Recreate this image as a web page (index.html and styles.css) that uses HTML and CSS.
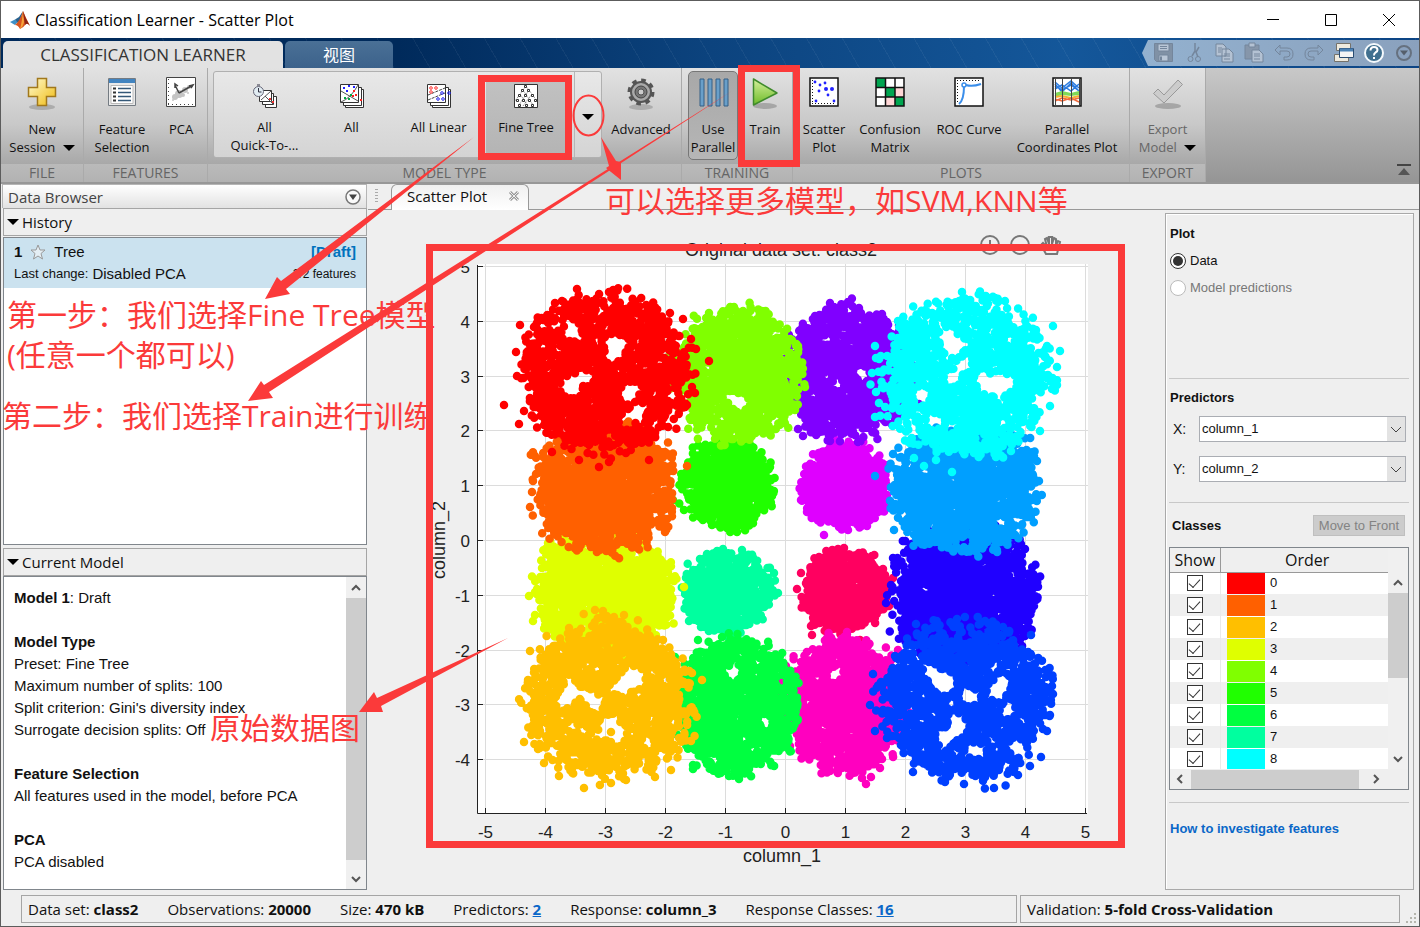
FILE: index.html
```html
<!DOCTYPE html>
<html lang="en">
<head>
<meta charset="utf-8">
<meta name="viewport" content="width=device-width, initial-scale=1">
<title>Classification Learner - Scatter Plot</title>
<link rel="stylesheet" href="styles.css">
</head>
<body>
<div class="window">
  <header class="titlebar">
    <svg class="logo" viewBox="0 0 20 20" aria-hidden="true">
      <path d="M0 12 5 9.500 8 12 5 15z" fill="#3f8fc6"/>
      <path d="M5 9.500 9 7 13 1 10 11 8 13z" fill="#29628f"/>
      <path d="M13 1Q10 11 5 15q3 0 5 4 4-2 6-5 2-1 4 2-4-8-7-15z" fill="#d9541e"/>
      <path d="M13 1Q12 12 10 19q3-2 4-7z" fill="#f6a43a"/>
      <path d="M13 1q2 7 7 15-3-4-5-1-1-6-2-14z" fill="#8e2415"/>
    </svg>
    <h1 class="title">Classification Learner - Scatter Plot</h1>
    <div class="winbtns">
      <button type="button" aria-label="Minimize"><svg viewBox="0 0 14 14"><path d="M1 6.500h12"/></svg></button>
      <button type="button" aria-label="Maximize"><svg viewBox="0 0 14 14"><path d="M1.500 1.500h11v11h-11z"/></svg></button>
      <button type="button" aria-label="Close"><svg viewBox="0 0 14 14"><path d="M1 1l12 12M13 1 1 13"/></svg></button>
    </div>
  </header>

  <nav class="tabstrip">
    <button type="button" class="tab tab-on">CLASSIFICATION LEARNER</button>
    <button type="button" class="tab tab-off">视图</button>
    <div class="quick">
      <button type="button" aria-label="Save"><svg class="dim" viewBox="0 0 22 22"><path d="M1.500 1.500h18v18h-16l-2-2z" fill="#8091a5"/><path d="M5 2h11v7H5zM6 13h9v6H6z" fill="#b9c6d6"/><path d="M7 4.500h7M7 6.500h7"/><path d="M8 14.500v4" stroke-width="2"/></svg></button>
      <button type="button" aria-label="Cut"><svg class="dim" viewBox="0 0 22 22"><path d="M12 1v8l-3 5M16 5l-3 5 2 5" stroke-width="1.500"/><circle cx="7.500" cy="17" r="2.500"/><circle cx="15" cy="17" r="2.500"/></svg></button>
      <button type="button" aria-label="Copy"><svg class="dim" viewBox="0 0 22 22"><path d="M3 2h7l3 3v9H3zM9 7h7l4 4v9H9z" fill="#b4c2d3"/><path d="M5 6h4M5 8h3M5 10h3M11 12h6M11 14h6M11 17h6"/></svg></button>
      <button type="button" aria-label="Paste"><svg class="dim" viewBox="0 0 22 22"><path d="M2 3h14v14H2z" fill="#8696aa"/><path d="M6 1h6v4H6zM9 8h7l4 4v8H9z" fill="#b4c2d3"/><path d="M11 12h6M11 14h6M11 17h6"/></svg></button>
      <button type="button" aria-label="Undo"><svg class="dim" viewBox="0 0 22 22"><path d="M2 8l5-5v3h7q6 0 6 6t-6 6h-3v-3h3q3 0 3-3t-3-3H7v4z"/></svg></button>
      <button type="button" aria-label="Redo"><svg class="dim" viewBox="0 0 22 22"><path d="M20 8l-5-5v3H8q-6 0-6 6t6 6h3v-3H8q-3 0-3-3t3-3h7v4z"/></svg></button>
      <button type="button" aria-label="Switch windows"><svg viewBox="0 0 22 22"><path d="M3.500 1.500h14v7h-14zM1.500 12.500h14v7h-14z" fill="#eeeade" stroke="#75726a"/><path d="M6.500 6.500h14v9h-14z" fill="#f4f4f4" stroke="#2a4d72"/><path d="M7 6.500h13v3H7z" fill="#4c82b4"/></svg></button>
      <button type="button" aria-label="Help"><svg viewBox="0 0 22 22"><circle cx="11" cy="11" r="9" fill="#41708f" stroke="#f4f9fc" stroke-width="2"/><path d="M7.500 8.500q0-3.500 3.500-3.500t3.500 3q0 1.500-2 2.500-1.500 1-1.500 3M11 15v2" fill="none" stroke="#fff" stroke-width="2"/></svg></button>
      <button type="button" aria-label="More"><svg viewBox="0 0 22 22"><circle cx="11" cy="11" r="7" fill="none" stroke="#66717f" stroke-width="2"/><path d="M7 8.500h8l-4 5z" fill="#555f6b"/></svg></button>
    </div>
  </nav>

  <div class="ribbon">
    <section class="group g-file">
      <div class="tools">
        <button type="button" class="tool w-file">
          <svg class="ico" viewBox="0 0 32 36"><defs><linearGradient id="gold" x1="0" y1="0" x2="1" y2="1"><stop offset="0" stop-color="#fffbd0"/><stop offset="1" stop-color="#f0bb10"/></linearGradient></defs><ellipse cx="16" cy="31" rx="13" ry="3" fill="#888" opacity=".5"/><path d="M11.500 2.500h9v9h9v9h-9v9h-9v-9h-9v-9h9z" fill="url(#gold)" stroke="#a1781c" stroke-width="1.500"/></svg>
          <span>New<br>Session <i class="arrow"></i></span>
        </button>
      </div>
      <h2>FILE</h2>
    </section>
    <section class="group g-features">
      <div class="tools">
        <button type="button" class="tool w-feature">
          <svg class="ico" viewBox="0 0 32 36"><path d="M2.500 2.500h27v27h-27z" fill="#e9e9e9" stroke="#747b82"/><path d="M3 3h26v4H3z" fill="#4284c0"/><path d="M5 9.500h22v18H5z" fill="#fff" stroke="#bbb"/><path d="M7 12.500h3M7 16.500h3M7 20.500h3M7 24.500h3" stroke="#333" stroke-width="2"/><path d="M12 12.500h13M12 16.500h13M12 20.500h13M12 24.500h13" stroke="#345878" stroke-width="1.500"/></svg>
          <span>Feature<br>Selection</span>
        </button>
        <button type="button" class="tool w-pca">
          <svg class="ico" viewBox="0 0 32 36"><path d="M1.500 1.500h29v29h-29z" fill="#fff" stroke="#444"/><path d="M3.500 3v26M3 28.500h26" stroke="#444" stroke-dasharray="1 3" fill="none"/><g fill="#c4c4c4"><circle cx="10" cy="21" r="3"/><circle cx="14" cy="18" r="4"/><circle cx="20" cy="14" r="3"/><circle cx="18" cy="19" r="2"/><circle cx="24" cy="11" r="2"/><circle cx="8" cy="24" r="1"/><circle cx="23" cy="17" r="1"/></g><path d="M14 17 10 9m0 3V8l3 2M14 17l14-8m-4 1 4-1-2 3" fill="none" stroke="#444" stroke-width="1.500"/></svg>
          <span>PCA</span>
        </button>
      </div>
      <h2>FEATURES</h2>
    </section>
    <section class="group g-model">
      <div class="tools">
        <div class="gallery">
          <button type="button" class="model">
            <svg class="gico" viewBox="0 0 26 26"><g fill="#fff" stroke="#333"><path d="M13.500 13.500h11v11h-11z"/><path d="M10.500 10.500h11v11h-11z"/><path d="M7.500 7.500h12v11h-12z"/></g><path d="M9 17 19 8M13 13l8 8" stroke="#555"/><path d="M17 16h2M20 19h2" stroke="#e33" stroke-width="2"/><circle cx="6.500" cy="8.500" r="5" fill="#e1ecf2" stroke="#667"/><path d="M6.500 5v4h3M5 2h3" stroke="#334" fill="none"/></svg>
            <span>All<br>Quick-To-...</span>
          </button>
          <button type="button" class="model">
            <svg class="gico" viewBox="0 0 26 26"><g fill="#fff" stroke="#333"><path d="M6.500 6.500h18v18h-18z"/><path d="M4.500 4.500h18v18h-18z"/><path d="M1.500 1.500h18v18h-18z"/></g><path d="M2 19Q12 15 19 2M2 8l17 10" stroke="#555" fill="none"/><path d="M4 5h2M9 3h2M7 8h2M14 4h2" stroke="#22f" stroke-width="2"/><path d="M14 8h2M16 12h2M13 13h2M21 17h2" stroke="#f22" stroke-width="2"/><path d="M5 15h2M9 16h2M11 12h2" stroke="#0a4" stroke-width="2"/></svg>
            <span>All</span>
          </button>
          <button type="button" class="model">
            <svg class="gico" viewBox="0 0 26 26"><g fill="#fff" stroke="#333"><path d="M6.500 6.500h18v18h-18z"/><path d="M4.500 4.500h18v18h-18z"/><path d="M1.500 1.500h18v18h-18z"/></g><path d="M2 12 19 5M2 17l17-7" stroke="#444" stroke-dasharray="3 1"/><g fill="none" stroke="#f33"><circle cx="5" cy="5" r="1.300"/><circle cx="10" cy="5" r="1.300"/><circle cx="5" cy="9" r="1.300"/></g><g fill="none" stroke="#22e"><circle cx="16" cy="10" r="1.300"/><circle cx="12" cy="16" r="1.300"/><circle cx="17" cy="16" r="1.300"/><circle cx="23" cy="10" r="1.300"/></g></svg>
            <span>All Linear</span>
          </button>
          <button type="button" class="model model-on" aria-pressed="true">
            <svg class="gico" viewBox="0 0 26 26"><path d="M1.500 1.500h23v23h-23z" fill="#fff" stroke="#333"/><path d="M13 3 2 18M13 3l11 15M10 7l10 15M16 7 6 22M7 11l8 12M19 11l-9 12" stroke="#777" stroke-dasharray="1 1"/><g fill="#fff" stroke="#333"><path d="M11.500 2.500h2v2h-2zM8.500 6.500h2v2h-2zM14.500 6.500h2v2h-2zM5.500 11.500h2v2h-2zM11.500 11.500h2v2h-2zM18.500 11.500h2v2h-2zM3.500 16.500h2v2h-2zM9.500 16.500h2v2h-2zM15.500 16.500h2v2h-2zM21.500 16.500h2v2h-2zM5.500 21.500h2v2h-2zM12.500 21.500h2v2h-2zM18.500 21.500h2v2h-2z"/></g></svg>
            <span>Fine Tree</span>
          </button>
          <button type="button" class="more" aria-label="More models"><i class="arrow"></i></button>
        </div>
        <button type="button" class="tool w-adv">
          <svg class="ico" viewBox="0 0 32 36"><ellipse cx="16" cy="31" rx="12" ry="3" fill="#888" opacity=".5"/><circle cx="16" cy="16" r="11.500" fill="none" stroke="#555" stroke-width="4" stroke-dasharray="4.500 4.500"/><circle cx="16" cy="16" r="10" fill="#a9a9a9" stroke="#555" stroke-width="2"/><circle cx="16" cy="16" r="6" fill="#777" stroke="#444"/><circle cx="16" cy="16" r="3" fill="#ccc" stroke="#555"/></svg>
          <span>Advanced</span>
        </button>
      </div>
      <h2>MODEL TYPE</h2>
    </section>
    <section class="group g-train">
      <div class="tools">
        <button type="button" class="tool w-par tool-on" aria-pressed="true">
          <svg class="ico" viewBox="0 0 32 36"><g fill="#699fc9" stroke="#345f85"><path d="M3 3h4v27H3zM11 3h4v27h-4zM19 3h4v27h-4zM27 3h4v27h-4z"/></g></svg>
          <span>Use<br>Parallel</span>
        </button>
        <button type="button" class="tool w-train">
          <svg class="ico" viewBox="0 0 32 36"><defs><linearGradient id="play" x1="0" y1="0" x2="0" y2="1"><stop offset="0" stop-color="#d5ef9c"/><stop offset="1" stop-color="#6dbb28"/></linearGradient></defs><ellipse cx="16" cy="30" rx="12" ry="3" fill="#888" opacity=".6"/><path d="M4.500 3v26L28 17z" fill="url(#play)" stroke="#3f8a2c" stroke-width="1.500" stroke-linejoin="round"/></svg>
          <span>Train</span>
        </button>
      </div>
      <h2>TRAINING</h2>
    </section>
    <section class="group g-plots">
      <div class="tools">
        <button type="button" class="tool w-scatter">
          <svg class="ico" viewBox="0 0 32 36"><path d="M2 2h28v28H2z" fill="#fff" stroke="#111" stroke-width="1.500"/><path d="M4.500 4v24M4 27.500h24" stroke="#111" stroke-dasharray="1 2" fill="none"/><g fill="#22f"><circle cx="7" cy="6" r="1.400"/><circle cx="12" cy="9" r="1.400"/><circle cx="17" cy="7" r="1.400"/><circle cx="11" cy="15" r="1.400"/><circle cx="18" cy="13" r="2"/><circle cx="24" cy="13" r="2"/><circle cx="20" cy="19" r="1.400"/><circle cx="8" cy="25" r="1.400"/><circle cx="26" cy="25" r="1.400"/></g></svg>
          <span>Scatter<br>Plot</span>
        </button>
        <button type="button" class="tool w-conf">
          <svg class="ico" viewBox="0 0 32 36"><path d="M2 2h28v28H2z" fill="#fff"/><path d="M2 2h9v9H2zM12 12h9v9h-9zM21 21h9v9h-9z" fill="#00a550"/><path d="M21 12h9v9h-9zM12 21h9v9h-9z" fill="#ffd6d6"/><path d="M2 2h28v28H2zM11.500 2v28M21 2v28M2 11.500h28M2 21h28" fill="none" stroke="#111" stroke-width="1.500"/></svg>
          <span>Confusion<br>Matrix</span>
        </button>
        <button type="button" class="tool w-roc">
          <svg class="ico" viewBox="0 0 32 36"><path d="M2 2h28v28H2z" fill="#fff" stroke="#111" stroke-width="1.500"/><path d="M4.500 4v24M4 4.500h24" stroke="#111" stroke-dasharray="1 2" fill="none"/><path d="M6 28q5-4 5-18M13 9q6 2 15-1" fill="none" stroke="#3b8eea" stroke-width="2"/><circle cx="11" cy="9" r="2" fill="#fff" stroke="#3b8eea" stroke-width="1.500"/></svg>
          <span>ROC Curve</span>
        </button>
        <button type="button" class="tool w-coord">
          <svg class="ico" viewBox="0 0 32 36"><path d="M2 2h28v28H2z" fill="#fff" stroke="#111" stroke-width="1.500"/><g fill="none" stroke-width="1.500"><path d="M4 6l7 6 9-7 8 7M4 10l7 4 9-5 8 6M4 13l7-4 9 6 8-7M4 8l7 8 9-9 8 8" stroke="#2b7be0"/><path d="M4 18l7-2 9 2 8-2M4 20l7-2 9 1 8-1" stroke="#7ed957" stroke-width="2"/><path d="M4 21l7-1 9 2 8-2" stroke="#f5b030" stroke-width="2"/><path d="M4 25l7-3 9 2 8-2M4 23l7 2 9-3 8 4" stroke="#f06a3c"/></g><path d="M4.500 3v26M11.500 2v28M20.500 2v28M28.500 2v28" stroke="#444"/></svg>
          <span>Parallel<br>Coordinates Plot</span>
        </button>
      </div>
      <h2>PLOTS</h2>
    </section>
    <section class="group g-export">
      <div class="tools">
        <button type="button" class="tool w-export" disabled>
          <svg class="ico" viewBox="0 0 32 36"><ellipse cx="16" cy="30" rx="13" ry="3" fill="#888" opacity=".6"/><path d="M1.500 17.500 6 13l6 6L26 4l4.500 4.500L12 27z" fill="#ccc" stroke="#999"/></svg>
          <span>Export<br>Model <i class="arrow"></i></span>
        </button>
      </div>
      <h2>EXPORT</h2>
    </section>
    <div class="ribbon-end">
      <button type="button" aria-label="Collapse ribbon"><svg viewBox="0 0 14 12"><path d="M0 1h14" stroke="#444" stroke-width="2"/><path d="M1 11 7 4l6 7z" fill="#555"/></svg></button>
    </div>
  </div>

  <main class="work">
    <aside class="browser">
      <div class="browser-head"><span>Data Browser</span>
        <button type="button" aria-label="Panel menu"><svg viewBox="0 0 16 16"><circle cx="8" cy="8" r="7" fill="#fafafa" stroke="#777" stroke-width="1.500"/><path d="M4 5.500h8L8 11z" fill="#444"/></svg></button>
      </div>
      <h2 class="fold"><i class="arrow"></i>History</h2>
      <div class="history">
        <div class="entry">
          <div class="entry-row"><b>1</b><svg class="star" viewBox="0 0 16 16"><path d="M8 1l2 5h5l-4 3.500 1.500 5.500L8 12l-4.500 3L5 9.500 1 6h5z" fill="#e4eef4" stroke="#999"/></svg><span>Tree</span><b class="draft">[Draft]</b></div>
          <div class="entry-row"><small>Last change:</small><span class="change">Disabled PCA</span><small class="feat">2/2 features</small></div>
        </div>
      </div>
      <h2 class="fold"><i class="arrow"></i>Current Model</h2>
      <div class="current">
        <div class="details">
          <p><b>Model 1</b>: Draft</p>
          <p><b>Model Type</b><br>Preset: Fine Tree<br>Maximum number of splits: 100<br>Split criterion: Gini's diversity index<br>Surrogate decision splits: Off</p>
          <p><b>Feature Selection</b><br>All features used in the model, before PCA</p>
          <p><b>PCA</b><br>PCA disabled</p>
        </div>
        <div class="vbar"><svg viewBox="0 0 12 8"><path d="M2 6l4-4 4 4"/></svg><div class="thumb thumb-tall"></div><svg viewBox="0 0 12 8"><path d="M2 2l4 4 4-4"/></svg></div>
      </div>
    </aside>

    <div class="document">
      <div class="doctabs">
        <div class="grip"></div>
        <div class="doctab">Scatter Plot<button type="button" aria-label="Close tab"><svg viewBox="0 0 12 12"><path d="M2 2l8 8M10 2l-8 8" stroke="#999" stroke-width="3"/><path d="M2 2l8 8M10 2l-8 8" stroke="#eee"/></svg></button></div>
        <div class="tabline"></div>
      </div>
      <div class="plotarea">
        <div class="figure">
          <svg id="chart" class="chart" viewBox="368 210 792 680" role="img" aria-label="Scatter plot of column_1 against column_2"></svg>
        </div>
        <form class="options">
          <fieldset class="opt-plot">
            <legend>Plot</legend>
            <label><input type="radio" name="plot" checked>Data</label>
            <label class="off"><input type="radio" name="plot" disabled>Model predictions</label>
          </fieldset>
          <fieldset class="opt-pred">
            <legend>Predictors</legend>
            <div class="pick"><label for="px">X:</label><span class="combo"><select id="px"><option>column_1</option><option>column_2</option></select><svg viewBox="0 0 12 8"><path d="M1 2l5 5 5-5"/></svg></span></div>
            <div class="pick"><label for="py">Y:</label><span class="combo"><select id="py"><option>column_2</option><option>column_1</option></select><svg viewBox="0 0 12 8"><path d="M1 2l5 5 5-5"/></svg></span></div>
          </fieldset>
          <div class="opt-classes">
            <div class="classes-head"><h3>Classes</h3><button type="button" disabled>Move to Front</button></div>
            <div class="classes">
              <div class="tablebox">
                <table>
                  <thead><tr><th class="c-show">Show</th><th class="c-order" colspan="2">Order</th></tr></thead>
                  <tbody id="classes"></tbody>
                </table>
              </div>
              <div class="vbar"><svg viewBox="0 0 12 8"><path d="M2 6l4-4 4 4"/></svg><div class="thumb thumb-short"></div><svg class="push" viewBox="0 0 12 8"><path d="M2 2l4 4 4-4"/></svg></div>
              <div class="hbar"><svg viewBox="0 0 8 12"><path d="M6 2 2 6l4 4"/></svg><div class="thumb"></div><svg viewBox="0 0 8 12"><path d="M2 2l4 4-4 4"/></svg></div>
            </div>
          </div>
          <div class="help"><a href="#features">How to investigate features</a></div>
        </form>
      </div>
    </div>
  </main>

  <footer class="status">
    <div class="facts">
      <span>Data set: <b>class2</b></span><span>Observations: <b>20000</b></span><span>Size: <b>470 kB</b></span><span>Predictors: <a href="#predictors">2</a></span><span>Response: <b>column_3</b></span><span>Response Classes: <a href="#classes">16</a></span>
    </div>
    <div class="validation"><span>Validation: <b>5-fold Cross-Validation</b></span></div>
    <svg class="resize" viewBox="0 0 12 12"><path d="M9 1h2v2H9zM5 5h2v2H5zM9 5h2v2H9zM1 9h2v2H1zM5 9h2v2H5zM9 9h2v2H9z" fill="#b5b5ad"/></svg>
  </footer>

  <div class="notes">
    <svg viewBox="0 0 1420 927" width="1420" height="927" aria-hidden="true">
      <g fill="none" stroke="#fb3a3a" stroke-width="7">
        <path d="M481.500 78.500h87v78h-87zM741.500 68.500h55v95h-55zM429.500 247.500h692v597h-692z"/>
        <ellipse cx="588.500" cy="115.500" rx="15" ry="20" stroke-width="2"/>
      </g>
      <g fill="#fb3a3a">
        <path d="M474 137 281 281 277 277 265 299 290 294 286 289z"/>
        <path d="M732 91 264 385 261 381 248 401 273 398 269 392z"/>
        <path d="M601 137 609 166 606 168 621 180V162l-5-1z"/>
        <path d="M508 638 377 698 374 692 359 712h24l-2-6z"/>
      </g>
    </svg>
    <p class="note note-more">可以选择更多模型，如SVM,KNN等</p>
    <p class="note note-one">第一步：我们选择Fine Tree模型<br>(任意一个都可以)</p>
    <p class="note note-two">第二步：我们选择Train进行训练</p>
    <p class="note note-raw">原始数据图</p>
  </div>
</div>
<script src="plot.js"></script>
</body>
</html>
```

FILE: styles.css
```css
* { box-sizing: border-box; }
body {
  margin: 0;
  font: 15px/20px "Open Sans", "Noto Sans CJK SC", sans-serif;
  color: #111;
  background: #efefef;
}
button, select, input { font: inherit; color: inherit; }
button { margin: 0; padding: 0; border: 0; background: none; }
h1, h2, h3, p { margin: 0; font-weight: 400; }
svg { display: block; flex: none; }

.window {
  position: relative;
  display: flex;
  flex-direction: column;
  min-height: 100vh;
  border: 1px solid #5c5c5c;
  background: #efefef;
  overflow: hidden;
}

/* title bar */
.titlebar { display: flex; align-items: center; height: 37px; padding-left: 9px; background: #fff; }
.logo { width: 20px; height: 20px; }
.title { flex: 1; margin-left: 5px; font-size: 16px; color: #000; }
.winbtns { display: flex; padding-right: 1px; }
.winbtns button { display: grid; place-items: center; width: 58px; height: 36px; }
.winbtns svg { width: 14px; height: 14px; fill: none; stroke: #000; }

/* tab strip */
.tabstrip {
  display: flex;
  align-items: flex-end;
  height: 30px;
  padding-left: 2px;
  background:
    repeating-linear-gradient(60deg, transparent 0 30px, rgba(255,255,255,.05) 30px 31px),
    linear-gradient(90deg, #002a5b 0, #002a5b 28%, #0c437e 50%, #14579a 75%, #0c4484 100%);
}
.tab { height: 27px; border-radius: 5px 5px 0 0; }
.tab-on { width: 280px; font-size: 17px; color: #333; background: #e2e2e2; }
.tab-off { width: 108px; margin-left: 2px; font-size: 16px; color: #fff; background: linear-gradient(#4a7096, #3c628b); }
.quick {
  display: flex;
  align-items: center;
  align-self: center;
  height: 26px;
  margin-left: auto;
  padding-left: 7px;
  background: linear-gradient(90deg, #93b1cf, #8aa1bd);
  clip-path: polygon(0 50%, 6px 0, 100% 0, 100% 100%, 6px 100%);
}
.quick button { display: grid; place-items: center; width: 30px; height: 26px; }
.quick svg { width: 22px; height: 22px; }
.quick .dim { fill: none; stroke: #74869c; }

/* ribbon */
.ribbon {
  display: flex;
  height: 116px;
  border-bottom: 2px solid #979797;
  background: linear-gradient(#e2e2e2, #c8c8c8 50%, #a8a8a8 96px, #bababa 96px, #b2b2b2);
}
.group { display: flex; flex-direction: column; border-right: 1px solid #aaa; }
.group h2 { height: 18px; font-size: 14px; line-height: 18px; text-align: center; color: #656565; }
.tools { display: flex; align-items: flex-start; justify-content: center; height: 96px; padding-top: 3px; }
.g-file { width: 83px; }
.g-features { width: 124px; }
.g-model { width: 474px; }
.g-train { width: 111px; }
.g-plots { width: 337px; }
.g-export { width: 76px; }
.g-features .tools { justify-content: flex-start; }
.g-model .tools { justify-content: flex-start; padding-left: 5px; }
.g-train .tools { justify-content: flex-start; padding-left: 6px; }
.tool {
  display: flex;
  flex-direction: column;
  align-items: center;
  height: 89px;
  padding-top: 4px;
  border: 1px solid transparent;
  font-size: 13px;
  line-height: 18px;
  white-space: nowrap;
}
.ico { width: 32px; height: 36px; margin-bottom: 8px; }
.w-feature { width: 76px; }
.w-pca { width: 42px; }
.w-adv { width: 78px; }
.w-par { width: 50px; }
.w-train { width: 54px; }
.w-scatter { width: 54px; }
.w-conf { width: 78px; }
.w-roc { width: 80px; }
.w-coord { width: 116px; }
.tool:disabled { color: #666; }
.tool-on { border: 1px solid #777; border-radius: 5px; background: linear-gradient(#a8a8a8, #b6b6b6); }
.arrow {
  display: inline-block;
  margin-left: 4px;
  border: 6px solid transparent;
  border-top-color: #000;
  border-bottom: 0;
  vertical-align: 1px;
}
.gallery {
  display: flex;
  width: 389px;
  height: 87px;
  border: 1px solid #b0b0b0;
  border-radius: 3px;
  background: linear-gradient(#e8e8e8, #d4d4d4);
}
.model {
  display: flex;
  flex-direction: column;
  align-items: center;
  width: 87px;
  height: 80px;
  padding-top: 8px;
  margin-top: 3px;
  font-size: 13px;
  line-height: 18px;
  white-space: nowrap;
}
.model:first-child { margin-left: 7px; }
.gico { width: 26px; height: 26px; margin-bottom: 9px; }
.model-on { width: 80px; margin-left: 4px; border-radius: 3px; background: linear-gradient(#c2c2c2, #b4b4b4); }
.more { flex: 1; margin-left: 8px; border-left: 1px solid #b6b6b6; }
.more .arrow { margin: 0; }
.ribbon-end { display: flex; flex: 1; align-items: flex-end; justify-content: flex-end; padding: 0 8px 6px; background: linear-gradient(#c8c8c8, #959595); }
.ribbon-end svg { width: 14px; height: 12px; }

/* work area */
.work { display: flex; flex: 1; min-height: 0; }
.browser { display: flex; flex-direction: column; width: 367px; padding: 0 1px; }
.browser-head {
  display: flex;
  align-items: center;
  justify-content: space-between;
  height: 24px;
  padding: 0 5px;
  border: 1px solid #b5b5b5;
  border-bottom: 0;
  color: #444;
  background: linear-gradient(#fff, #e2e2e2);
}
.browser-head svg { width: 16px; height: 16px; }
.fold { display: flex; align-items: center; height: 28px; margin-left: 1px; padding-left: 3px; border: 1px solid #a5a5a5; font-size: 15px; line-height: 20px; }
.fold .arrow { margin: 0 3px 0 0; }
.history { flex: 1; margin: 1px 0 3px 1px; border: 1px solid #80868c; background: #fff; font: 15px/20px "Liberation Sans", sans-serif; }
.entry { padding: 3px 10px; background: #cbe2ef; }
.entry-row { display: flex; align-items: center; height: 22px; }
.star { width: 16px; height: 16px; margin: 0 8px; }
.draft { margin-left: auto; color: #0072bd; }
.entry small { font-size: 13px; }
.change { margin-left: 4px; }
.entry .feat { margin-left: auto; font-size: 12px; }
.current { display: flex; height: 314px; margin: 0 0 4px 1px; border: 1px solid #80868c; background: #fff; }
.details { flex: 1; padding: 10px; font: 15px/22px "Liberation Sans", sans-serif; white-space: nowrap; }
.details p { margin-bottom: 22px; }
.vbar { display: flex; flex-direction: column; align-items: center; width: 20px; background: #f0f0f0; }
.vbar svg { width: 12px; height: 8px; margin: 7px 0 6px; }
.vbar svg, .hbar svg { fill: none; stroke: #555; stroke-width: 2; }
.vbar .push { margin-top: auto; }
.thumb { background: #cdcdcd; }
.thumb-tall { flex: 1; width: 20px; margin-bottom: 8px; }
.thumb-short { width: 20px; height: 85px; }

.document { display: flex; flex: 1; flex-direction: column; min-width: 0; }
.doctabs { display: flex; height: 26px; }
.grip { width: 23px; border-bottom: 1px solid #999; background: repeating-linear-gradient(#aaa 0 1px, transparent 1px 3px) 7px 5px / 3px 15px no-repeat; }
.doctab {
  display: flex;
  align-items: center;
  justify-content: space-between;
  width: 138px;
  padding: 0 8px 3px 15px;
  border: 1px solid #999;
  border-bottom: 0;
  border-radius: 6px 6px 0 0;
  background: linear-gradient(#f0f0f0, #fff);
}
.doctab svg { width: 12px; height: 12px; }
.tabline { flex: 1; border-bottom: 1px solid #999; }
.plotarea { display: flex; flex: 1; }
.figure { flex: 1; min-width: 0; }
.chart { width: 100%; height: auto; }
.chart text { font-family: "Liberation Sans", sans-serif; fill: #222; }
.chart .tick { font-size: 17px; }
.chart .name { font-size: 18px; }

/* options panel */
.options {
  display: flex;
  flex-direction: column;
  width: 249px;
  margin: 3px 5px 4px;
  padding: 0 4px 0 3px;
  border: 1px solid #a9a9a9;
  box-shadow: inset 1px 1px #fff;
  font: 13px/20px "Liberation Sans", sans-serif;
}
.options fieldset { min-width: 0; margin: 0; padding: 0; border: 0; border-bottom: 1px solid #c8c8c8; }
.options legend { float: left; width: 100%; padding: 0 0 0 1px; font-weight: 700; }
.opt-plot { height: 165px; }
.opt-plot legend { margin: 10px 0 7px; }
.opt-plot label { display: flex; clear: both; align-items: center; height: 20px; margin-bottom: 7px; padding-left: 1px; }
.off { color: #777; }
.options input { appearance: none; display: grid; place-items: center; width: 16px; height: 16px; margin: 0 4px 0 0; border: 1px solid #333; background: #fff; }
.options input[type=radio] { border-radius: 50%; }
.options input[type=radio]:checked::after { content: ""; width: 10px; height: 10px; border-radius: 50%; background: #333; }
.options input:disabled { border-color: #bbb; }
.opt-pred { height: 124px; }
.opt-pred legend { margin: 9px 0 8px; }
.pick { display: flex; clear: both; align-items: center; margin-bottom: 14px; padding-left: 4px; }
.pick label { width: 26px; font-size: 14px; }
.combo { position: relative; flex: 1; margin-right: 3px; }
.combo select { appearance: none; display: block; width: 100%; height: 26px; padding: 0 22px 0 2px; border: 1px solid #aaadb3; border-radius: 0; background: linear-gradient(90deg, #fff, #fff) 0 0 / calc(100% - 18px) 100% no-repeat #e3e3e3; }
.combo svg { position: absolute; top: 9px; right: 4px; width: 12px; height: 8px; fill: none; stroke: #444; pointer-events: none; }
.opt-classes { padding-bottom: 12px; border-bottom: 1px solid #c8c8c8; }
.classes-head { display: flex; justify-content: space-between; align-items: center; padding: 12px 4px 11px 3px; }
.classes-head h3 { font-size: 13px; font-weight: 700; }
.classes-head button { height: 21px; padding: 0 5px; border: 1px solid #bfbfbf; background: #ccc; color: #838383; }
.classes { display: grid; grid-template-columns: 1fr 20px; grid-template-rows: 221px 20px; border: 1px solid #80868c; }
.tablebox { overflow: hidden; }
.classes .vbar { padding-top: 24px; }
.classes table { width: 100%; border-collapse: collapse; }
.classes th { height: 24px; padding: 0; border-bottom: 1px solid #999; font: 16px/20px "Open Sans", sans-serif; }
.classes .c-show { width: 50px; border-right: 1px solid #999; }
.classes .c-order { padding-left: 6px; text-align: center; }
.classes td { height: 22px; padding: 0; line-height: 20px; }
.classes tbody tr { background: #fff; }
.classes tbody tr:nth-child(even) { background: #efefef; }
.classes td:first-child { border-right: 1px solid #eaeaea; }
.classes td:nth-child(2) { width: 45px; padding-left: 6px; }
.classes td:nth-child(3) { padding: 0 0 0 5px; }
.classes input { margin: 0 auto; }
.classes input::after { content: ""; width: 10px; height: 5px; margin-top: -3px; border: solid #333; border-width: 0 0 1px 1px; transform: rotate(-48deg); }
.swatch { display: block; height: 21px; }
.hbar { display: flex; grid-column: 1 / 3; align-items: center; padding-right: 28px; }
.hbar svg { width: 8px; height: 12px; margin: 0 7px 0 6px; }
.hbar svg:last-child { margin: 0 0 0 13px; }
.hbar .thumb { flex: 1; height: 19px; }
.help { padding: 16px 1px; font-weight: 700; }
.help a { color: #0a67c8; text-decoration: none; }

/* status bar */
.status { display: flex; align-items: center; height: 32px; padding: 0 2px 2px 20px; font-size: 15px; }
.facts, .validation { display: flex; align-items: center; height: 28px; border: 1px solid #a5a5a5; white-space: nowrap; }
.facts { flex: 1; gap: 29px; margin-right: 3px; padding-left: 6px; }
.validation { width: 380px; margin-right: 5px; padding-left: 6px; }
.status a { font-weight: 700; color: #0a67c8; }
.resize { align-self: flex-end; width: 12px; height: 12px; }

/* tutorial annotations over the window */
.notes { position: absolute; top: -1px; left: -1px; width: 1420px; height: 927px; pointer-events: none; }
.note { position: absolute; font: 30px/40px "Open Sans", "Noto Sans CJK SC", sans-serif; color: #fb3a3a; white-space: nowrap; }
.note-more { left: 605px; top: 181px; }
.note-one { left: 7px; top: 295px; }
.note-two { left: 2px; top: 396px; }
.note-raw { left: 210px; top: 708px; }
```

FILE: plot.js
```js
const colours = ["#ff0000", "#ff6000", "#ffbf00", "#dfff00", "#80ff00", "#20ff00", "#00ff40", "#00ff9f",
  "#00ffff", "#009fff", "#0040ff", "#2000ff", "#8000ff", "#df00ff", "#ff00bf", "#ff0060"];

// One cluster per class: centre, radii, number of points, gaps [x, y, r], stray points [x, y].
const clusters = [
  { c: [605, 374], r: [83, 80], n: 1350, gaps: [[571, 387, 7], [629, 394, 6], [616, 346, 7], [612, 356, 4], [637, 413, 5], [627, 421, 4], [572, 332, 5], [584, 378, 4]],
    out: [[577, 289], [504, 405], [519, 424], [516, 352], [517, 376], [520, 325], [535, 326], [524, 411], [709, 361], [683, 319], [599, 467], [649, 460], [579, 460], [552, 452], [670, 313], [609, 462], [534, 327], [691, 339], [696, 349], [692, 387], [695, 393], [555, 303], [562, 301], [543, 320], [687, 405]] },
  { c: [605, 487], r: [68, 64], n: 1400, e: 2.4, gaps: [], out: [[530, 507], [532, 492], [533, 481], [687, 466], [551, 524], [665, 532], [536, 474], [535, 456], [665, 526]] },
  { c: [608, 700], r: [83, 78], n: 1350, gaps: [[633, 679, 8], [623, 688, 5], [572, 692, 6], [609, 727, 7], [617, 734, 6], [596, 703, 4], [588, 697, 4], [565, 700, 4]],
    out: [[584, 788], [595, 610], [603, 611], [624, 615], [605, 619], [524, 742], [538, 749], [544, 763], [559, 776], [702, 680], [691, 741], [692, 673], [530, 651], [655, 777], [671, 770], [611, 783], [611, 732], [614, 617], [626, 780]] },
  { c: [606, 595], r: [68, 62], n: 1500, e: 2.4, gaps: [], out: [[529, 596], [533, 621], [535, 615], [684, 587], [542, 568], [546, 554], [674, 581], [537, 589]] },
  { c: [738, 374], r: [64, 66], n: 1250, gaps: [[737, 402, 4], [732, 398, 2]], out: [[734, 307], [709, 313], [743, 311], [756, 320], [805, 387], [798, 346], [724, 314], [747, 313], [797, 396], [795, 410], [733, 321]] },
  { c: [727, 485], r: [46, 44], n: 750, gaps: [], out: [[684, 510], [737, 532], [727, 528], [772, 496], [771, 490], [770, 467], [768, 482], [712, 525], [673, 500]] },
  { c: [737, 705], r: [63, 67], n: 1250, gaps: [[733, 673, 4], [766, 722, 2]], out: [[698, 640], [722, 637], [693, 765], [693, 769], [721, 771], [729, 776], [739, 774], [747, 767], [675, 657], [776, 655], [780, 656], [707, 764]] },
  { c: [727, 592], r: [45, 42], n: 700, gaps: [], out: [[774, 573], [778, 593], [742, 550], [751, 555], [723, 549], [701, 627], [733, 635], [700, 559], [707, 554]] },
  { c: [965, 376], r: [84, 80], n: 1300, gaps: [[953, 345, 8], [948, 336, 5], [996, 385, 8], [985, 381, 5], [922, 395, 5], [934, 421, 4], [954, 377, 4], [1007, 382, 4], [964, 365, 4]],
    out: [[962, 292], [995, 298], [1005, 301], [1053, 326], [1036, 330], [1060, 351], [1057, 367], [1057, 385], [1052, 389], [1050, 406], [1040, 431], [875, 346], [876, 358], [872, 373], [876, 392], [875, 417], [952, 472], [924, 466], [914, 458], [996, 457], [1011, 451], [936, 460], [983, 300], [879, 403], [1047, 346]] },
  { c: [965, 488], r: [71, 63], n: 1400, e: 2.4, gaps: [], out: [[875, 476], [894, 530], [1028, 517], [1032, 500], [1039, 481], [1037, 461], [1034, 456], [895, 504], [893, 454], [1021, 452]] },
  { c: [967, 701], r: [84, 80], n: 1350, gaps: [[945, 683, 8], [932, 672, 4], [997, 691, 6], [1003, 683, 5], [957, 729, 6], [946, 737, 5], [969, 697, 5], [977, 751, 4], [1008, 711, 4], [1019, 749, 4], [957, 722, 4]],
    out: [[994, 788], [964, 784], [945, 782], [873, 674], [870, 705], [875, 731], [881, 682], [1052, 686], [1053, 694], [1050, 715], [1047, 731], [1041, 757], [1030, 766], [1014, 772], [895, 656], [916, 624], [938, 628], [1003, 627], [985, 621], [957, 619], [1031, 635], [1046, 677], [913, 772], [887, 738]] },
  { c: [965, 594], r: [69, 64], n: 1600, e: 2.5, gaps: [], out: [[886, 603], [891, 585], [893, 558], [1021, 544], [1025, 549], [1034, 606], [1036, 600], [1030, 629], [897, 567], [1033, 584], [904, 635]] },
  { c: [845, 374], r: [63, 66], n: 1250, gaps: [[838, 385, 2], [862, 374, 3]], out: [[830, 303], [848, 302], [841, 307], [859, 308], [815, 316], [826, 311], [803, 436], [798, 429], [919, 404], [830, 441], [858, 442], [887, 322], [882, 314], [861, 313]] },
  { c: [845, 485], r: [44, 43], n: 750, gaps: [], out: [[824, 535], [848, 530], [867, 526], [870, 520], [888, 465], [801, 500], [853, 522], [839, 527], [807, 512]] },
  { c: [846, 705], r: [62, 66], n: 1300, gaps: [[834, 675, 3]], out: [[866, 784], [862, 778], [871, 777], [842, 768], [880, 768], [860, 766], [790, 746], [847, 632], [827, 638], [877, 760], [898, 650], [786, 666]] },
  { c: [845, 591], r: [43, 41], n: 750, gaps: [], out: [[819, 557], [797, 589], [801, 573], [872, 556], [812, 635], [860, 640], [893, 578], [889, 606], [811, 626], [882, 570]] }
];

let seed = 20000;
function random() {
  seed = (seed * 1664525 + 1013904223) % 4294967296;
  return seed / 4294967296;
}

function dots({ c, r, n, e = 2, gaps, out }) {
  const spots = out.slice();
  while (spots.length < n) {
    const angle = random() * Math.PI * 2;
    const noise = random() + random() + random() - 1.5;
    const reach = Math.pow(random(), 0.56) * (0.97 + 0.17 * noise);
    const bulge = Math.pow(Math.pow(Math.abs(Math.cos(angle)), e) + Math.pow(Math.abs(Math.sin(angle)), e), -1 / e);
    const x = c[0] + r[0] * reach * bulge * Math.cos(angle);
    const y = c[1] + r[1] * reach * bulge * Math.sin(angle);
    if (gaps.every(g => Math.hypot(x - g[0], y - g[1]) > g[2] + 4)) spots.push([x, y]);
  }
  return spots.map(p => `M${p[0].toFixed(1)} ${p[1].toFixed(1)}h0`).join("");
}

const px = v => 785.5 + v * 60;
const py = v => Math.round(540 - v * 54.8) + 0.5;
let art = '<rect x="478" y="264" width="610" height="549" fill="#fff"/>';
let grid = "", ticks = "", labels = "";
for (let v = -5; v <= 5; v++) {
  grid += `M${px(v)} 264V813`;
  ticks += `M${px(v)} 813v-5`;
  labels += `<text class="tick" text-anchor="middle" x="${px(v)}" y="838">${v}</text>`;
  if (v > -5) {
    grid += `M478 ${py(v)}H1088`;
    ticks += `M478 ${py(v)}h5`;
    labels += `<text class="tick" text-anchor="end" x="470" y="${py(v) + 6}">${v}</text>`;
  }
}
art += `<path d="${grid}" stroke="#dcdcdc"/>`;
for (let i = 15; i >= 0; i--) {
  art += `<path d="${dots(clusters[i])}" stroke="${colours[i]}" stroke-width="8.5" stroke-linecap="round"/>`;
}
art += `<path d="M477.5 265V813.5H1087${ticks}" fill="none" stroke="#222"/>${labels}`;
art += '<text class="name" x="685" y="256">Original data set: class2</text>';
art += '<text class="name" x="743" y="862">column_1</text>';
art += '<text class="name" transform="translate(445 579) rotate(-90)">column_2</text>';
art += '<g fill="none" stroke="#777" stroke-width="2"><circle cx="990" cy="245" r="9"/><path d="M985 245h10M990 240v10"/><circle cx="1020" cy="245" r="9"/><path d="M1015 245h10"/><path d="M1046 254l-5-9 2-2 4 4-2-8 2-1 2 6v-7h3v7l2-6 2 1v6l2-4 2 1-3 12z"/></g>';
document.getElementById("chart").innerHTML = art;

document.getElementById("classes").innerHTML = colours.slice(0, 9).map((colour, i) =>
  `<tr><td><input type="checkbox" checked aria-label="Show class ${i}"></td><td><span class="swatch" style="background:${colour}"></span></td><td>${i}</td></tr>`).join("");
```
